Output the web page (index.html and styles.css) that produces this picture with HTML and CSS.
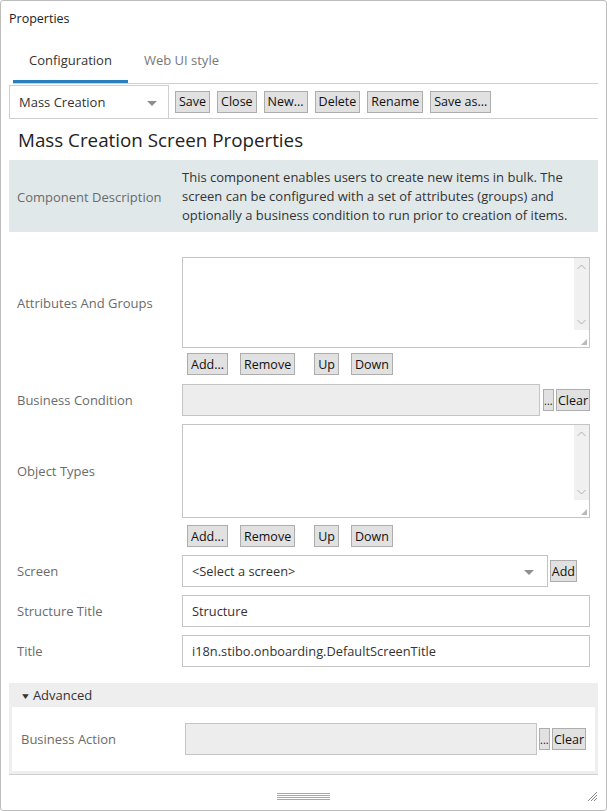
FILE: index.html
```html
<!DOCTYPE html>
<html lang="en">
<head>
    <meta charset="UTF-8">
    <meta name="viewport" content="width=device-width, initial-scale=1.0">
    <title>Properties</title>
    <link rel="stylesheet" href="styles.css">
</head>
<body>
<div class="panel">
    <div class="panel-title">Properties</div>

    <!-- Tabs -->
    <div class="tabs">
        <div class="tab active">Configuration</div>
        <div class="tab">Web UI style</div>
    </div>

    <!-- Toolbar -->
    <div class="toolbar">
        <div class="dropdown">Mass Creation<span class="caret"></span></div>
        <button class="btn">Save</button>
        <button class="btn">Close</button>
        <button class="btn">New...</button>
        <button class="btn">Delete</button>
        <button class="btn">Rename</button>
        <button class="btn">Save as...</button>
    </div>

    <h2 class="heading">Mass Creation Screen Properties</h2>

    <div class="desc-row">
        <div class="label">Component Description</div>
        <div class="desc">This component enables users to create new items in bulk. The screen can be configured with a set of attributes (groups) and optionally a business condition to run prior to creation of items.</div>
    </div>

    <div class="fields">
        <div class="row">
            <div class="label">Attributes And Groups</div>
            <div class="listbox attr-list">
                <div class="list-area"></div>
                <div class="scrollbar">
                    <svg width="9" height="6" viewBox="0 0 9 6"><polyline points="0.5,5 4.5,1 8.5,5" fill="none" stroke="#b0b0b0" stroke-width="1"/></svg>
                    <svg width="9" height="6" viewBox="0 0 9 6"><polyline points="0.5,1 4.5,5 8.5,1" fill="none" stroke="#b0b0b0" stroke-width="1"/></svg>
                </div>
                <span class="resize"></span>
            </div>
        </div>
        <div class="list-buttons">
            <button class="btn">Add...</button>
            <button class="btn gap-sm">Remove</button>
            <button class="btn gap-lg">Up</button>
            <button class="btn gap-sm">Down</button>
        </div>

        <div class="row spaced-9">
            <div class="label">Business Condition</div>
            <div class="input disabled"></div>
            <button class="btn dots">...</button>
            <button class="btn clear">Clear</button>
        </div>

        <div class="row spaced-8">
            <div class="label">Object Types</div>
            <div class="listbox type-list">
                <div class="list-area"></div>
                <div class="scrollbar">
                    <svg width="9" height="6" viewBox="0 0 9 6"><polyline points="0.5,5 4.5,1 8.5,5" fill="none" stroke="#b0b0b0" stroke-width="1"/></svg>
                    <svg width="9" height="6" viewBox="0 0 9 6"><polyline points="0.5,1 4.5,5 8.5,1" fill="none" stroke="#b0b0b0" stroke-width="1"/></svg>
                </div>
                <span class="resize"></span>
            </div>
        </div>
        <div class="list-buttons types">
            <button class="btn">Add...</button>
            <button class="btn gap-sm">Remove</button>
            <button class="btn gap-lg">Up</button>
            <button class="btn gap-sm">Down</button>
        </div>

        <div class="row spaced-8">
            <div class="label">Screen</div>
            <div class="input select">&lt;Select a screen&gt;<span class="caret"></span></div>
            <button class="btn add">Add</button>
            <div class="add-spacer"></div>
        </div>
        <div class="row spaced-8">
            <div class="label">Structure Title</div>
            <div class="input">Structure</div>
        </div>
        <div class="row spaced-8">
            <div class="label">Title</div>
            <div class="input">i18n.stibo.onboarding.DefaultScreenTitle</div>
        </div>
    </div>

    <!-- Advanced -->
    <div class="advanced">
        <div class="advanced-head"><span class="tri">&#9660;</span>Advanced</div>
        <div class="advanced-body">
            <div class="row">
                <div class="label">Business Action</div>
                <div class="input disabled"></div>
                <button class="btn dots">...</button>
                <button class="btn clear">Clear</button>
            </div>
        </div>
    </div>

    <div class="footer">
        <span class="handle"></span>
        <svg class="grip" width="11" height="11" viewBox="0 0 11 11">
            <line x1="10" y1="1" x2="1" y2="10" stroke="#8a8a8a"/>
            <line x1="10" y1="4" x2="4" y2="10" stroke="#8a8a8a"/>
            <line x1="10" y1="7" x2="7" y2="10" stroke="#8a8a8a"/>
        </svg>
    </div>
</div>
</body>
</html>
```

FILE: styles.css
```css
body {
    margin: 0;
    font-family: "Open Sans", "Noto Sans", sans-serif;
    font-size: 13px;
    color: #333;
    background: #fff;
}
.panel {
    width: 607px;
    height: 811px;
    box-sizing: border-box;
    border: 1px solid #bdbdbd;
    border-radius: 3px;
    display: flex;
    flex-direction: column;
}
.panel-title {
    height: 36px;
    line-height: 36px;
    padding-left: 8px;
    font-size: 12.5px;
    color: #222;
}
.tabs {
    display: flex;
    margin: 0 8px 0 12px;
    border-bottom: 1px solid #cfcfcf;
}
.tab {
    height: 46px;
    line-height: 47px;
    padding: 0 16px;
    font-size: 13px;
    color: #777;
}
.tab.active {
    color: #333;
    box-shadow: inset 0 -3px 0 #2a7fbf;
}
.toolbar {
    display: flex;
    align-items: center;
    margin: 1px 8px 0;
    height: 33px;
    border-bottom: 1px solid #cfcfcf;
}
.dropdown {
    position: relative;
    width: 149px;
    height: 33px;
    line-height: 33px;
    padding-left: 9px;
    border: 1px solid #cfcfcf;
    border-bottom: none;
    font-size: 13px;
    color: #333;
}
.caret {
    position: absolute;
    right: 11px;
    top: 15px;
    width: 0;
    height: 0;
    border-left: 5px solid transparent;
    border-right: 5px solid transparent;
    border-top: 5px solid #8f8f8f;
}
.btn {
    font-family: inherit;
    font-size: 12.5px;
    color: #111;
    background: #e1e1e1;
    border: 1px solid #adadad;
    height: 22px;
    padding: 0 3px;
    margin: 0;
    line-height: 19px;
}
.toolbar .btn {
    margin-left: 7px;
}
.toolbar .btn:first-of-type {
    margin-left: 6px;
}
.heading {
    margin: 9px 0 0 17px;
    font-size: 18.8px;
    line-height: 24px;
    font-weight: normal;
    color: #222;
}
.desc-row {
    display: flex;
    align-items: center;
    margin: 8px 8px 0;
    background: #e1e8ea;
    padding: 8px 0 7px;
}
.label {
    width: 173px;
    flex: none;
    box-sizing: border-box;
    padding-left: 8px;
    font-size: 13px;
    color: #6b6b6b;
}
.desc {
    line-height: 19px;
    color: #333;
    padding-right: 14px;
}
.fields {
    margin: 25px 16px 0 8px;
}
.row {
    display: flex;
    align-items: center;
}
.spaced-9 {
    margin-top: 9px;
}
.spaced-8 {
    margin-top: 8px;
}
.listbox {
    position: relative;
    flex: 1;
    display: flex;
    border: 1px solid #c4c4c4;
    box-sizing: border-box;
}
.attr-list {
    height: 91px;
}
.type-list {
    height: 94px;
}
.list-area {
    flex: 1;
}
.scrollbar {
    width: 15px;
    margin: 0 0 17px;
    background: #f0f0f0;
    display: flex;
    flex-direction: column;
    justify-content: space-between;
    align-items: center;
    padding: 6px 0 5px;
}
.resize {
    position: absolute;
    right: 2px;
    bottom: 2px;
    width: 6px;
    height: 6px;
    background: radial-gradient(circle, #b5b5b5 0.7px, transparent 0.8px) 0 0 / 2px 2px;
    clip-path: polygon(100% 0, 100% 100%, 0 100%);
}
.list-buttons {
    display: flex;
    margin: 5px 0 0 178px;
    height: 22px;
}
.list-buttons.types {
    margin-top: 7px;
}
.list-buttons .btn {
    padding: 0 3px;
}
.gap-sm {
    margin-left: 12px;
}
.gap-lg {
    margin-left: 19px;
}
.input {
    position: relative;
    flex: 1;
    height: 32px;
    line-height: 30px;
    box-sizing: border-box;
    border: 1px solid #c4c4c4;
    padding-left: 9px;
    color: #333;
    font-size: 12.8px;
}
.input.disabled {
    background: #ededed;
}
.input.select .caret {
    right: 13px;
    top: 14px;
}
.dots {
    width: 11px;
    height: 22px;
    padding: 0;
    margin-left: 3px;
    font-size: 11px;
    line-height: 22px;
}
.clear {
    margin-left: 2px;
    padding: 0 1px;
    height: 22px;
}
.add {
    margin-left: 2px;
    padding: 0 1px;
    height: 22px;
}
.add-spacer {
    width: 13px;
}
.advanced {
    margin: 16px 8px 0;
    background: #eee;
    padding: 0 3px 3px;
    border-bottom: 1px solid #cfcfcf;
}
.advanced-head {
    height: 24px;
    line-height: 24px;
    padding-left: 8px;
    font-size: 13px;
    color: #333;
}
.tri {
    display: inline-block;
    font-size: 11px;
    margin-right: 2px;
    transform: scaleY(0.75);
}
.advanced-body {
    background: #fff;
    padding: 16px 9px 16px 0;
}
.advanced-body .label {
    padding-left: 9px;
}
.advanced-body .dots {
    margin-left: 2px;
}
.footer {
    flex: 1;
    position: relative;
}
.handle {
    position: absolute;
    left: 276px;
    top: 18px;
    width: 53px;
    height: 7px;
    background: repeating-linear-gradient(to bottom, #a8a8a8 0 1px, transparent 1px 2px);
}
.grip {
    position: absolute;
    right: 8px;
    bottom: 8px;
}
```
